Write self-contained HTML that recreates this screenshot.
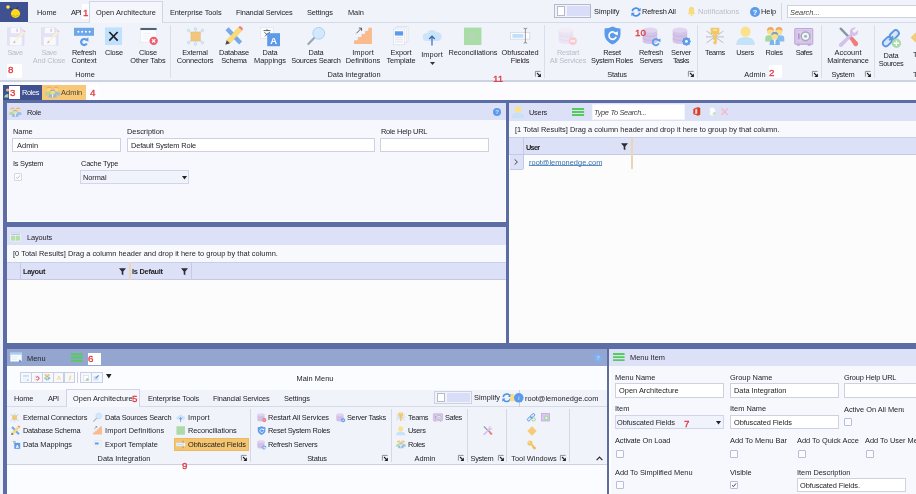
<!DOCTYPE html>
<html><head><meta charset="utf-8"><title>LemonEdge</title>
<style>
*{box-sizing:border-box;margin:0;padding:0}
html,body{width:916px;height:494px;overflow:hidden;background:#f1f3fb}
body{font-family:"Liberation Sans",sans-serif;font-size:7.4px;color:#232328;position:relative}
#app{position:absolute;left:0;top:0;width:916px;height:494px;will-change:transform}
.a{position:absolute;white-space:nowrap}
.t{position:absolute;white-space:nowrap;line-height:9px;height:9px}
.t{transform:rotate(0.01deg)}
.c{transform:translateX(-50%) rotate(0.01deg);text-align:center}
.g{color:#b9bcc9}
.b{font-weight:bold}
.red{position:absolute;color:#e2373f;font-size:9.8px;line-height:10px;white-space:nowrap;transform:rotate(0.01deg);-webkit-text-stroke:0.3px #e2373f}
.wb{position:absolute;background:#fff}
.inp{position:absolute;background:#fff;border:1px solid #cdd1e0;white-space:nowrap;overflow:hidden}
.cb{position:absolute;width:8px;height:8px;background:#fcfcff;border:1px solid #b7bfd8;border-radius:1px}
.sep{position:absolute;width:1px;background:#d3d7e6}
.hdr{position:absolute;background:#dde1f7}
.pan{position:absolute;background:#f9fafe}
svg{position:absolute;overflow:visible}
</style></head><body>
<div id="app">
<!-- top bar -->
<div class="a" style="left:0px;top:0px;width:916px;height:23px;background:#f1f3fb;"></div>
<div class="a" style="left:28px;top:22px;width:61px;height:1px;background:#d5d9e8;"></div>
<div class="a" style="left:163px;top:22px;width:753px;height:1px;background:#d5d9e8;"></div>
<div class="a" style="left:0px;top:1.5px;width:28px;height:20px;background:#3f5191;"></div>
<svg style="left:3.2px;top:2.3px;" width="22" height="19" viewBox="0 0 22 19"><circle cx="5" cy="5" r="1.8" fill="#ffe44d"/><path d="M7 6L10 9M15 5L13 8" stroke="#222" stroke-width="0.8"/><ellipse cx="12.5" cy="11.5" rx="4.6" ry="4.4" fill="#ffd91f"/><path d="M9.5 13.5Q12.5 15.5 15.5 13" stroke="#c9a400" stroke-width="0.8" fill="none"/></svg>
<div class="a" style="left:89px;top:1px;width:74px;height:22px;border:1px solid #cfd4e6;border-bottom:none;background:#f4f6fc"></div>
<div class="t " style="left:37.3px;top:7.9px;letter-spacing:-0.010px;">Home</div>
<div class="t " style="left:70.8px;top:7.9px;letter-spacing:-0.709px;">API</div>
<div class="wb" style="left:82px;top:4px;width:7px;height:15px"></div>
<div class="red" style="left:82.7px;top:8.0px">1</div>
<div class="t " style="left:95.8px;top:7.9px;letter-spacing:0.045px;">Open Architecture</div>
<div class="t " style="left:170.1px;top:7.9px;letter-spacing:-0.083px;">Enterprise Tools</div>
<div class="t " style="left:236.1px;top:7.9px;letter-spacing:-0.197px;">Financial Services</div>
<div class="t " style="left:307px;top:7.9px;letter-spacing:-0.105px;">Settings</div>
<div class="t " style="left:347.8px;top:7.9px;letter-spacing:-0.060px;">Main</div>
<div class="a" style="left:554px;top:4px;width:37px;height:14px;border:1px solid #b4b9cd;background:#f1f3fb"></div>
<div class="a" style="left:556.5px;top:5.5px;width:8px;height:10.5px;border:1px solid #b5b9cc;background:#fff"></div>
<div class="a" style="left:566.5px;top:5.5px;width:23px;height:10.5px;background:#d9ddf7;"></div>
<div class="t " style="left:594px;top:6.9px;letter-spacing:-0.050px;">Simplify</div>
<svg style="left:631px;top:6.5px;" width="10" height="10" viewBox="0 0 10 10"><path d="M1.2 4.2A4 4 0 0 1 8.6 3.2" fill="none" stroke="#4a90e2" stroke-width="1.6"/><path d="M9.6 0.8V4.2H6.2z" fill="#4a90e2"/><path d="M8.8 5.8A4 4 0 0 1 1.4 6.8" fill="none" stroke="#4a90e2" stroke-width="1.6"/><path d="M0.4 9.2V5.8H3.8z" fill="#4a90e2"/></svg>
<div class="t " style="left:642.3px;top:6.9px;letter-spacing:-0.180px;">Refresh All</div>
<svg style="left:687px;top:6px;" width="9" height="11" viewBox="0 0 9 11"><path d="M4.5 0.8C2.6 0.8 1.8 2.4 1.8 4.2V6.6L0.6 8.2H8.4L7.2 6.6V4.2C7.2 2.4 6.4 0.8 4.5 0.8z" fill="#f8db7d"/><circle cx="4.5" cy="9.3" r="1" fill="#f8db7d"/></svg>
<div class="t g" style="left:698px;top:6.9px;letter-spacing:0.077px;">Notifications</div>
<svg style="left:749.5px;top:6.5px;" width="10" height="10" viewBox="0 0 10 10"><circle cx="5" cy="5" r="5" fill="#5b9bea"/><text x="5" y="7.6" font-size="7.5" font-weight="bold" fill="#fff" text-anchor="middle" font-family="Liberation Sans, sans-serif">?</text></svg>
<div class="t " style="left:761px;top:6.9px;letter-spacing:-0.030px;">Help</div>
<div class="a" style="left:781px;top:3px;width:1px;height:17px;background:#d3d7e6;"></div>
<div class="inp" style="left:786.5px;top:5px;width:135px;height:13px;"></div>
<div class="t " style="left:790.0px;top:7.5px;font-style:italic;color:#444">Search...</div>
<!-- ribbon -->
<div class="a" style="left:0px;top:80px;width:916px;height:1.9px;background:#ccd2e2;"></div>
<div class="t c g" style="left:15.3px;top:48.2px;letter-spacing:-0.417px;">Save</div>
<div class="t c g" style="left:49.3px;top:48.2px;letter-spacing:-0.417px;">Save</div>
<div class="t c g" style="left:49.3px;top:56.2px;letter-spacing:-0.171px;">And Close</div>
<div class="t c " style="left:83.7px;top:48.2px;letter-spacing:-0.273px;">Refresh</div>
<div class="t c " style="left:83.7px;top:56.2px;letter-spacing:-0.057px;">Context</div>
<div class="t c " style="left:113.8px;top:48.2px;letter-spacing:-0.184px;">Close</div>
<div class="t c " style="left:148.2px;top:48.2px;letter-spacing:-0.184px;">Close</div>
<div class="t c " style="left:148.2px;top:56.2px;letter-spacing:-0.076px;">Other Tabs</div>
<div class="t c " style="left:85.2px;top:69.8px;letter-spacing:-0.035px;">Home</div>
<div class="wb" style="left:7px;top:64px;width:15px;height:14px"></div>
<div class="red" style="left:7.7px;top:65.2px">8</div>
<div class="a" style="left:170.2px;top:25px;width:1.1px;height:53px;background:#d9ddec;"></div>
<div class="t c " style="left:194.7px;top:48.2px;letter-spacing:-0.231px;">External</div>
<div class="t c " style="left:194.7px;top:56.2px;letter-spacing:-0.114px;">Connectors</div>
<div class="t c " style="left:233.5px;top:48.2px;letter-spacing:-0.209px;">Database</div>
<div class="t c " style="left:233.5px;top:56.2px;letter-spacing:-0.308px;">Schema</div>
<div class="t c " style="left:270.2px;top:48.2px;letter-spacing:-0.208px;">Data</div>
<div class="t c " style="left:270.2px;top:56.2px;letter-spacing:-0.010px;">Mappings</div>
<div class="t c " style="left:316.2px;top:48.2px;letter-spacing:-0.208px;">Data</div>
<div class="t c " style="left:316.2px;top:56.2px;letter-spacing:-0.225px;">Sources Search</div>
<div class="t c " style="left:363.2px;top:48.2px;letter-spacing:0.122px;">Import</div>
<div class="t c " style="left:363.2px;top:56.2px;letter-spacing:0.005px;">Definitions</div>
<div class="t c " style="left:400.9px;top:48.2px;letter-spacing:-0.064px;">Export</div>
<div class="t c " style="left:400.9px;top:56.2px;letter-spacing:-0.128px;">Template</div>
<div class="t c " style="left:431.8px;top:50.2px;letter-spacing:0.122px;">Import</div>
<div class="t c " style="left:472.5px;top:48.2px;letter-spacing:-0.051px;">Reconciliations</div>
<div class="t c " style="left:520.3px;top:48.2px;letter-spacing:-0.084px;">Obfuscated</div>
<div class="t c " style="left:520.3px;top:56.2px;letter-spacing:-0.240px;">Fields</div>
<div class="t c " style="left:353.7px;top:69.8px;letter-spacing:0.028px;">Data Integration</div>
<div class="red" style="left:493.2px;top:73.6px">11</div>
<div class="a" style="left:543.6px;top:25px;width:1.1px;height:53px;background:#d9ddec;"></div>
<div class="t c g" style="left:567.5px;top:48.2px;letter-spacing:-0.264px;">Restart</div>
<div class="t c g" style="left:567.5px;top:56.2px;letter-spacing:-0.163px;">All Services</div>
<div class="t c " style="left:612px;top:48.2px;letter-spacing:-0.326px;">Reset</div>
<div class="t c " style="left:612px;top:56.2px;letter-spacing:-0.304px;">System Roles</div>
<div class="t c " style="left:651px;top:48.2px;letter-spacing:-0.273px;">Refresh</div>
<div class="t c " style="left:651px;top:56.2px;letter-spacing:-0.385px;">Servers</div>
<div class="t c " style="left:680.5px;top:48.2px;letter-spacing:-0.332px;">Server</div>
<div class="t c " style="left:680.5px;top:56.2px;letter-spacing:-0.583px;">Tasks</div>
<div class="t c " style="left:616.7px;top:69.8px;letter-spacing:-0.246px;">Status</div>
<div class="a" style="left:696.8px;top:25px;width:1.1px;height:53px;background:#d9ddec;"></div>
<div class="t c " style="left:715.1px;top:48.2px;letter-spacing:-0.399px;">Teams</div>
<div class="t c " style="left:744.5px;top:48.2px;letter-spacing:-0.325px;">Users</div>
<div class="t c " style="left:774.4px;top:48.2px;letter-spacing:-0.404px;">Roles</div>
<div class="t c " style="left:804.1px;top:48.2px;letter-spacing:-0.484px;">Safes</div>
<div class="t c " style="left:755.2px;top:69.8px;letter-spacing:0.085px;">Admin</div>
<div class="wb" style="left:769px;top:65px;width:13px;height:13px"></div>
<div class="red" style="left:769.2px;top:67.5px">2</div>
<div class="a" style="left:821.2px;top:25px;width:1.1px;height:53px;background:#d9ddec;"></div>
<div class="t c " style="left:848px;top:48.2px;letter-spacing:0.038px;">Account</div>
<div class="t c " style="left:848px;top:56.2px;letter-spacing:-0.070px;">Maintenance</div>
<div class="t c " style="left:843px;top:69.8px;letter-spacing:-0.312px;">System</div>
<div class="a" style="left:873.6px;top:25px;width:1.1px;height:53px;background:#d9ddec;"></div>
<div class="t c " style="left:891.3px;top:50.6px;letter-spacing:-0.208px;">Data</div>
<div class="t c " style="left:891.3px;top:58.6px;letter-spacing:-0.364px;">Sources</div>
<div class="t " style="left:912.5px;top:50.2px;">T</div>
<div class="t " style="left:912.5px;top:69.8px;">T</div>
<svg style="left:535px;top:71px;" width="6" height="6" viewBox="0 0 6 6"><path d="M0.4 5.6V0.4H5.6" fill="none" stroke="#777" stroke-width="0.8"/><path d="M2 2L5 5" fill="none" stroke="#222" stroke-width="1.1"/><path d="M5.9 2.4V5.9H2.4z" fill="#222"/></svg>
<svg style="left:688px;top:71px;" width="6" height="6" viewBox="0 0 6 6"><path d="M0.4 5.6V0.4H5.6" fill="none" stroke="#777" stroke-width="0.8"/><path d="M2 2L5 5" fill="none" stroke="#222" stroke-width="1.1"/><path d="M5.9 2.4V5.9H2.4z" fill="#222"/></svg>
<svg style="left:812px;top:71px;" width="6" height="6" viewBox="0 0 6 6"><path d="M0.4 5.6V0.4H5.6" fill="none" stroke="#777" stroke-width="0.8"/><path d="M2 2L5 5" fill="none" stroke="#222" stroke-width="1.1"/><path d="M5.9 2.4V5.9H2.4z" fill="#222"/></svg>
<svg style="left:864.5px;top:71px;" width="6" height="6" viewBox="0 0 6 6"><path d="M0.4 5.6V0.4H5.6" fill="none" stroke="#777" stroke-width="0.8"/><path d="M2 2L5 5" fill="none" stroke="#222" stroke-width="1.1"/><path d="M5.9 2.4V5.9H2.4z" fill="#222"/></svg>
<svg style="left:429.5px;top:61.5px;" width="5" height="3" viewBox="0 0 5 3"><path d="M0 0H5L2.5 3z" fill="#333"/></svg>
<div class="a" style="left:0;top:0;opacity:1">
<svg style="left:6.699999999999999px;top:26.6px;" width="19.4" height="19.4" viewBox="0 0 20 20"><path d="M0.6 0.8H14.6L17.6 3.8V18.8H0.6z" fill="#e4e3f4" stroke="#d9d8ee" stroke-width="0.6"/><rect x="4" y="0.8" width="9.4" height="5.6" fill="#f8f8fe"/><rect x="9.6" y="1.8" width="1.8" height="3.2" fill="#d2d2e4"/><rect x="3" y="10.4" width="12.2" height="8.4" fill="#f8f8fe"/><path d="M16.8 3.8L18.4 5.2L8.8 15.6L6.6 16.8L7.4 14.4z" fill="#fbf3cf"/><path d="M17.2 3L19.2 4.8L18.4 5.8L16.4 4z" fill="#f4bcbc"/><path d="M6.4 17L7.2 14.2L9 15.8z" fill="#bdbdbd"/></svg>
<svg style="left:41.2px;top:26.6px;" width="19.4" height="19.4" viewBox="0 0 20 20"><path d="M0.6 0.8H14.6L17.6 3.8V18.8H0.6z" fill="#e4e3f4" stroke="#d9d8ee" stroke-width="0.6"/><rect x="4" y="0.8" width="9.4" height="5.6" fill="#f8f8fe"/><rect x="9.6" y="1.8" width="1.8" height="3.2" fill="#d2d2e4"/><rect x="3" y="10.4" width="12.2" height="8.4" fill="#f8f8fe"/><path d="M16.8 3.8L18.4 5.2L8.8 15.6L6.6 16.8L7.4 14.4z" fill="#fbf3cf"/><path d="M17.2 3L19.2 4.8L18.4 5.8L16.4 4z" fill="#f4bcbc"/><path d="M6.4 17L7.2 14.2L9 15.8z" fill="#bdbdbd"/></svg>
<svg style="left:73.5px;top:26.6px;" width="20" height="20" viewBox="0 0 20 20"><rect x="0" y="0.8" width="20" height="8" fill="#6ea6ea"/><g fill="#fff"><circle cx="4.4" cy="4.8" r="1"/><circle cx="8.1" cy="4.8" r="1"/><circle cx="11.9" cy="4.8" r="1"/><circle cx="15.6" cy="4.8" r="1"/></g><path d="M12.6 13.3A3 3 0 1 0 12.8 16.4" fill="none" stroke="#5b9bea" stroke-width="2.2"/><path d="M10.3 12.6L14.4 10.6V14.8z" fill="#5b9bea"/></svg>
<svg style="left:104.3px;top:26.6px;" width="19" height="19" viewBox="0 0 20 20"><rect x="1" y="0.5" width="18" height="18.5" fill="#bfe1fb"/><path d="M5.6 5.2L14.4 14.4M14.4 5.2L5.6 14.4" stroke="#1d1d26" stroke-width="1.7"/></svg>
<svg style="left:138.8px;top:26.6px;" width="19" height="19" viewBox="0 0 20 20"><rect x="1.5" y="1.5" width="17" height="14.5" fill="#fdfdfe" stroke="#e3e5ee" stroke-width="0.6"/><rect x="1.5" y="1" width="17" height="2.2" fill="#4f6278"/><path d="M4 7H13M4 9.5H12M4 12H10" stroke="#eceef4" stroke-width="0.9"/><circle cx="15.4" cy="14.6" r="4.4" fill="#ef5b6b"/><path d="M13.7 12.9L17.1 16.3M17.1 12.9L13.7 16.3" stroke="#fff" stroke-width="1.2"/></svg>
<svg style="left:185.5px;top:26.6px;" width="19" height="19" viewBox="0 0 20 20"><g stroke="#a9d3f3" stroke-width="0.8" fill="#e3f1fc"><path d="M10 5V2.6M10 15V17.4M5 6L3.2 4.2M15 6L16.8 4.2M5 14L3.2 15.8M15 14L16.8 15.8" fill="none"/><circle cx="10" cy="2" r="1.3"/><circle cx="10" cy="18" r="1.3"/><circle cx="2.8" cy="3.6" r="1.3"/><circle cx="17.2" cy="3.6" r="1.3"/><circle cx="2.8" cy="16.4" r="1.3"/><circle cx="17.2" cy="16.4" r="1.3"/></g><rect x="5.2" y="5.2" width="9.8" height="9.6" fill="#f1c67e" stroke="#e0b56a" stroke-width="0.5"/></svg>
<svg style="left:224.5px;top:27px;" width="18" height="18" viewBox="0 0 20 20"><path d="M0.6 3.6L4 0.4L19 16.2L15.6 19.4z" fill="#74a9ec"/><path d="M15 0.4L18.8 3.8L5.6 18L1.8 14.6z" fill="#f9dc78" stroke="#efc45a" stroke-width="0.5"/><path d="M15 0.4L18.8 3.8L20 2.4Q19.4 -0.2 16.4 -1z" fill="#f17f86"/><path d="M1.8 14.6L5.6 18L0.4 19.8z" fill="#4a4a4a"/></svg>
<svg style="left:260.0px;top:26.6px;" width="20" height="20" viewBox="0 0 20 20"><rect x="0.5" y="0.5" width="13" height="11" fill="#fbfcff" stroke="#dfe3ee" stroke-width="0.7"/><path d="M3.5 3.6H10.5M7 2V3.6M4.5 5.2Q7 9.5 9.8 5.2M5 9.4L9 5.4" fill="none" stroke="#444" stroke-width="0.8"/><rect x="7.2" y="6.2" width="12.8" height="13" fill="#5b9bea"/><text x="13.6" y="17" font-size="9.5" font-weight="bold" fill="#fff" text-anchor="middle" font-family="Liberation Sans, sans-serif">A</text></svg>
<svg style="left:307.1px;top:26.6px;" width="19" height="19" viewBox="0 0 20 20"><path d="M8.6 10.6L1.4 18" stroke="#98a7b6" stroke-width="2.2" stroke-linecap="round"/><circle cx="12.4" cy="6.6" r="6.2" fill="#d3e9fb" stroke="#a9d0f0" stroke-width="1"/></svg>
<svg style="left:353.85px;top:26.6px;" width="18.5" height="18.5" viewBox="0 0 20 20"><path d="M0.6 18.4V14.8H4.6V11.4H8.6V8H12.6V4.6H16V0.8H19.4V18.4z" fill="#f9bb8c"/><path d="M0.6 18.4V14.8H4.6V11.4H8.6V8H12.6V4.6H16V0.8" fill="none" stroke="#f2a46c" stroke-width="0.6"/><path d="M2.6 6.8L8 1.4M5.2 1.2H8.2V4.2" fill="none" stroke="#444" stroke-width="0.9"/></svg>
<svg style="left:391.25px;top:26.3px;" width="19.5" height="19.5" viewBox="0 0 20 20"><rect x="6" y="0.4" width="11.5" height="15.5" fill="#fbfcff" stroke="#d9dde8" stroke-width="0.7"/><rect x="4.2" y="1.8" width="11.5" height="15.5" fill="#fbfcff" stroke="#d9dde8" stroke-width="0.7"/><rect x="2.4" y="3.2" width="11.5" height="16" fill="#fdfdff" stroke="#d9dde8" stroke-width="0.7"/><rect x="4" y="5.4" width="8.4" height="4.4" fill="#5b9bea"/><path d="M4 12H12.4M4 14.2H12.4M4 16.4H12.4" stroke="#dfe1e8" stroke-width="1"/></svg>
<svg style="left:422.0px;top:26.4px;" width="20" height="20" viewBox="0 0 20 20"><g fill="#cbe4fa"><circle cx="4.6" cy="11" r="3.9"/><circle cx="10" cy="8.8" r="4.9"/><circle cx="15.4" cy="10.6" r="4.3"/><rect x="4.6" y="10" width="10.8" height="4.9"/></g><path d="M10 19.4V10.4M7.2 13L10 10L12.8 13" fill="none" stroke="#2d66b3" stroke-width="1.15"/></svg>
<svg style="left:463.1px;top:26.6px;" width="19" height="19" viewBox="0 0 20 20"><rect x="1" y="0.6" width="18.4" height="18.4" fill="#a9dca6"/><path d="M5.4 8.4H15M5.4 11.2H15" stroke="#bcd2bb" stroke-width="1.7"/></svg>
<svg style="left:510.29999999999995px;top:26.2px;" width="20" height="20" viewBox="0 0 20 20"><rect x="0.4" y="6.4" width="19.4" height="6.8" fill="#fdfdff" stroke="#d5d8e2" stroke-width="0.8"/><rect x="2.4" y="8" width="11" height="3.8" fill="#bfe0fb"/><path d="M15.4 2.4V17M13.6 2.2Q15.4 2.2 15.4 3.4Q15.4 2.2 17.2 2.2M13.6 17.2Q15.4 17.2 15.4 16Q15.4 17.2 17.2 17.2" fill="none" stroke="#7d7d86" stroke-width="0.8"/></svg>
<svg style="left:558.25px;top:26.6px;" width="18.5" height="18.5" viewBox="0 0 20 20"><path d="M0.8 3.4V15.6A7.8 2.9 0 0 0 16.4 15.6V3.4z" fill="#ebe5f3"/><ellipse cx="8.6" cy="3.4" rx="7.8" ry="2.9" fill="#f1ecf7"/><path d="M0.8 7.4A7.8 2.9 0 0 0 16.4 7.4M0.8 11.6A7.8 2.9 0 0 0 16.4 11.6" fill="none" stroke="#dcd2ea" stroke-width="0.7" stroke-opacity="0.75"/><circle cx="16" cy="15.2" r="4.4" fill="#f7cdd3"/><path d="M13.6 15.2H18.4" stroke="#fff" stroke-width="1.4"/></svg>
<svg style="left:602.5px;top:26.4px;" width="19" height="19" viewBox="0 0 20 20"><path d="M10 0.4Q6 2.6 1.6 2.6V9Q1.6 15.6 10 19.6Q18.4 15.6 18.4 9V2.6Q14 2.6 10 0.4z" fill="#5b9bea"/><path d="M13.6 8.2A3.9 3.9 0 1 0 13.9 11.4" fill="none" stroke="#fff" stroke-width="1.7"/><path d="M11.2 7.8L15.6 5.4V10z" fill="#fff"/></svg>
<svg style="left:642.25px;top:26.6px;" width="18.5" height="18.5" viewBox="0 0 20 20"><path d="M0.8 3.4V15.6A7.8 2.9 0 0 0 16.4 15.6V3.4z" fill="#d3c4e8"/><ellipse cx="8.6" cy="3.4" rx="7.8" ry="2.9" fill="#e0d5f1"/><path d="M0.8 7.4A7.8 2.9 0 0 0 16.4 7.4M0.8 11.6A7.8 2.9 0 0 0 16.4 11.6" fill="none" stroke="#b9a3d6" stroke-width="0.7" stroke-opacity="0.75"/><g transform="translate(0.4 1.2)"><path d="M17.6 13.6A3.4 3.4 0 1 0 17.8 16.4" fill="none" stroke="#5b9bea" stroke-width="1.9"/><path d="M15.6 13.4L19.6 11.2V15.4z" fill="#5b9bea"/></g></svg>
<svg style="left:671.75px;top:26.6px;" width="18.5" height="18.5" viewBox="0 0 20 20"><path d="M0.8 3.4V15.6A7.8 2.9 0 0 0 16.4 15.6V3.4z" fill="#d3c4e8"/><ellipse cx="8.6" cy="3.4" rx="7.8" ry="2.9" fill="#e0d5f1"/><path d="M0.8 7.4A7.8 2.9 0 0 0 16.4 7.4M0.8 11.6A7.8 2.9 0 0 0 16.4 11.6" fill="none" stroke="#b9a3d6" stroke-width="0.7" stroke-opacity="0.75"/><g transform="translate(15.6 15.6)"><circle r="3.1" fill="none" stroke="#5b9bea" stroke-width="2"/><path d="M0 -4.8V4.8M-4.8 0H4.8M-3.4 -3.4L3.4 3.4M3.4 -3.4L-3.4 3.4" stroke="#5b9bea" stroke-width="1.5"/><circle r="1.5" fill="#fff"/></g></svg>
<svg style="left:706.0px;top:27px;" width="18" height="18" viewBox="0 0 20 20"><path d="M0.6 4.4L19.4 17.6M19.4 4.4L0.6 17.6M0 11H20" stroke="#a3a8b5" stroke-width="0.8"/><path d="M5.2 0.8H14.8V7.8H12V18L10 19.6L8 18V16H9.4V14.4H8V7.8H5.2z" fill="#f2c765"/><rect x="7.6" y="2.4" width="4.8" height="1.8" rx="0.6" fill="#fbe7b0"/></svg>
<svg style="left:735.5px;top:26.3px;" width="19" height="19" viewBox="0 0 20 20"><circle cx="10" cy="6" r="5.4" fill="#fbe18d"/><path d="M0.6 19.4Q0.6 12.2 10 12.2Q19.4 12.2 19.4 19.4z" fill="#c5e3f8" stroke="#b3d6f0" stroke-width="0.5"/></svg>
<svg style="left:765.25px;top:26.4px;" width="19.5" height="19.5" viewBox="0 0 20 20"><path d="M0.2 16V13Q0.2 9.6 4 9.6H8V16z" fill="#a6d8a0"/><path d="M19.8 16V13Q19.8 9.6 16 9.6H12V16z" fill="#86bdf0"/><circle cx="5.6" cy="5.4" r="3.5" fill="#f8df8c"/><circle cx="14.4" cy="5.4" r="3.5" fill="#f8df8c"/><path d="M2 5.2Q2 1 5.6 1Q9.2 1 9.2 5.2Q7.4 3.4 5.6 3.6Q3.8 3.4 2 5.2zM10.8 5.2Q10.8 1 14.4 1Q18 1 18 5.2Q16.2 3.4 14.4 3.6Q12.6 3.4 10.8 5.2z" fill="#f2a560"/><path d="M4.8 19.6V17.2Q4.8 14 8 14H12Q15.2 14 15.2 17.2V19.6z" fill="#7db4ec"/><path d="M9 14H11L10.5 19H9.5z" fill="#fff"/><circle cx="10" cy="10" r="3.5" fill="#f8df8c"/><path d="M6.4 9.8Q6.4 5.8 10 5.8Q13.6 5.8 13.6 9.8Q11.8 8 10 8.2Q8.2 8 6.4 9.8z" fill="#7f9fc6"/></svg>
<svg style="left:794.45px;top:26.6px;" width="19.5" height="19.5" viewBox="0 0 20 20"><rect x="0.8" y="1.6" width="18.4" height="16" rx="1" fill="#dccdec" stroke="#bda4da" stroke-width="1.1"/><rect x="3" y="3.8" width="14" height="11.6" fill="none" stroke="#cbb8e2" stroke-width="0.7"/><circle cx="11.8" cy="9.6" r="4.4" fill="#f3f4f8" stroke="#a4aab8" stroke-width="1.5"/><circle cx="11.8" cy="9.6" r="1.5" fill="#a4aab8"/><rect x="4.2" y="6.6" width="1.5" height="6" fill="#a98fd0"/><rect x="3" y="17.6" width="3" height="1.6" fill="#bda4da"/><rect x="14" y="17.6" width="3" height="1.6" fill="#bda4da"/></svg>
<svg style="left:838.05px;top:26.6px;" width="20.5" height="20.5" viewBox="0 0 20 20"><path d="M2.6 1.6L11.6 10.8" stroke="#8797a7" stroke-width="2.3" stroke-linecap="round"/><path d="M10.6 10.6L13 8.4L19.4 15.2Q20.2 17.4 18.6 18.6Q17 19.4 15.6 18z" fill="#f07c7e"/><path d="M17.8 0.8Q13.4 -0.6 11.8 3.2Q11.2 5 12 6.6L1.2 16.4Q0.2 18.2 1.6 19.2Q3 20 4.4 18.8L14.2 8.4Q17 9.4 19 7Q20.2 5 19.6 3L16.8 5.6L14.6 5L14.2 3.2z" fill="#d3c1ea"/></svg>
<svg style="left:881.95px;top:28.6px;" width="19.5" height="19.5" viewBox="0 0 20 20"><g fill="#d9e7f9" stroke="#5b96e2" stroke-width="1.9"><rect x="9.4" y="0.6" width="6.4" height="10.6" rx="3.2" transform="rotate(45 12.6 5.9)"/><rect x="2.2" y="7.8" width="6.4" height="10.6" rx="3.2" transform="rotate(45 5.4 13.1)"/></g><path d="M7.4 11.6L11.4 7.6" stroke="#5b96e2" stroke-width="2"/><circle cx="14.8" cy="14.6" r="4.8" fill="#a9dba8"/><path d="M14.8 11.8V17.4M12 14.6H17.6" stroke="#fff" stroke-width="1.4"/></svg>
<svg style="left:909.7px;top:26.6px;" width="21" height="21" viewBox="0 0 20 20"><path d="M10 0.6L19.4 10L10 19.4L0.6 10z" fill="#f5cb78"/></svg>
</div>
<div class="red" style="left:634.8px;top:28.2px">10</div>
<!-- doc tabs -->
<div class="a" style="left:0px;top:81.5px;width:916px;height:18px;background:#fcfcfe;"></div>
<div class="a" style="left:3px;top:85px;width:39px;height:15px;background:#3f5191;"></div>
<div class="a" style="left:42px;top:84.6px;width:44px;height:15px;background:#f6c877;"></div>
<div class="wb" style="left:8.6px;top:85.6px;width:11.6px;height:13.2px"></div>
<div class="red" style="left:9.5px;top:87.5px">3</div>
<div class="t " style="left:22px;top:87.8px;color:#fff;letter-spacing:-0.344px;">Roles</div>
<div class="t " style="left:61.4px;top:87.9px;color:#4a4232;letter-spacing:0.065px;">Admin</div>
<div class="wb" style="left:89.4px;top:85px;width:9.8px;height:15.3px"></div>
<div class="red" style="left:89.5px;top:87.5px">4</div>
<!-- frame -->
<div class="a" style="left:3px;top:99.5px;width:913px;height:395px;background:#5c6da6;"></div>
<div class="a" style="left:6.8px;top:103.4px;width:499px;height:118.5px;background:#fff;"></div>
<div class="a" style="left:8px;top:120px;width:496.6px;height:100.5px;background:#f7f8fd;"></div>
<div class="a" style="left:6.8px;top:103.4px;width:499px;height:17px;background:#dde1f7;"></div>
<div class="t " style="left:27.3px;top:108.2px;letter-spacing:-0.255px;">Role</div>
<div class="t " style="left:12.7px;top:127.4px;">Name</div>
<div class="inp" style="left:12px;top:138px;width:108.5px;height:14.2px;"></div>
<div class="t " style="left:16.6px;top:141.1px;letter-spacing:0.045px;">Admin</div>
<div class="t " style="left:127.3px;top:127.4px;">Description</div>
<div class="inp" style="left:127px;top:138px;width:248px;height:14.2px;"></div>
<div class="t " style="left:130.8px;top:141.1px;letter-spacing:-0.129px;">Default System Role</div>
<div class="t " style="left:381px;top:127.4px;letter-spacing:-0.242px;">Role Help URL</div>
<div class="inp" style="left:380.3px;top:138px;width:109px;height:14.2px;"></div>
<div class="t " style="left:12.7px;top:159.4px;letter-spacing:-0.243px;">Is System</div>
<div class="cb" style="left:13.5px;top:173px;border-color:#d5d7e2;"><svg style="left:0;top:0" width="6" height="6" viewBox="0 0 6 6"><path d="M1 3.2L2.5 4.6L5 1.4" fill="none" stroke="#b9bccb" stroke-width="0.9"/></svg></div>
<div class="t " style="left:80.8px;top:159.4px;letter-spacing:-0.205px;">Cache Type</div>
<div class="inp" style="left:80px;top:169.8px;width:109px;height:14.2px;background:#f1f3fc;border-color:#d0d5e8"></div>
<div class="t " style="left:83px;top:172.9px;letter-spacing:-0.058px;">Normal</div>
<svg style="left:182px;top:175.5px;" width="5" height="3.5" viewBox="0 0 5 3.5"><path d="M0 0H5L2.5 3.5z" fill="#222"/></svg>
<svg style="left:492.5px;top:108px;" width="8" height="8" viewBox="0 0 8 8"><circle cx="4" cy="4" r="4" fill="#5b9bea"/><text x="4" y="6.3" font-size="6" font-weight="bold" fill="#cfe3ff" text-anchor="middle" font-family="Liberation Sans, sans-serif">?</text></svg>
<div class="a" style="left:509.2px;top:103.4px;width:407px;height:239.8px;background:#fcfcfd;"></div>
<div class="a" style="left:509.2px;top:120.6px;width:407px;height:17px;background:#f8f9fd;"></div>
<div class="a" style="left:509.2px;top:103.4px;width:407px;height:17.2px;background:#dde1f7;"></div>
<div class="t " style="left:528.8px;top:108.2px;letter-spacing:-0.245px;">Users</div>
<div class="inp" style="left:591.5px;top:104px;width:93px;height:16px;border-color:#f3f4fb"></div>
<div class="t " style="left:594.3px;top:108.0px;font-style:italic;color:#444;letter-spacing:-0.309px;">Type To Search...</div>
<div class="t " style="left:514.9px;top:124.9px;letter-spacing:0.021px;">[1 Total Results] Drag a column header and drop it here to group by that column.</div>
<div class="a" style="left:509.2px;top:137.6px;width:407px;height:16.8px;background:#dde1f7;"></div>
<div class="a" style="left:509.2px;top:137.4px;width:407px;height:0.8px;background:#c9cfea;"></div>
<div class="a" style="left:509.2px;top:154px;width:407px;height:0.8px;background:#c3c9e6;"></div>
<div class="a" style="left:522.6px;top:137.7px;width:0.8px;height:31.4px;background:#c3c9e6;"></div>
<div class="t b" style="left:526px;top:142.5px;letter-spacing:-0.739px;">User</div>
<div class="a" style="left:631.2px;top:137.7px;width:2.2px;height:31px;background:#ead6b4;"></div>
<div class="a" style="left:509.8px;top:154.8px;width:12.8px;height:14.2px;background:#dde1f7;"></div>
<div class="a" style="left:509.8px;top:168.6px;width:13.6px;height:0.7px;background:#c3c9e6;"></div>
<div class="t " style="left:528.8px;top:157.7px;color:#3471ab;letter-spacing:0.033px;">root@lemonedge.com</div>
<div class="a" style="left:528.8px;top:165px;width:73.5px;height:0.8px;background:#5b8cc0;"></div>
<svg style="left:514.2px;top:159.3px;" width="4" height="6" viewBox="0 0 4 6"><path d="M0.6 0.4L3.4 3L0.6 5.6" fill="none" stroke="#333" stroke-width="0.9"/></svg>
<div class="a" style="left:6.8px;top:227.2px;width:499px;height:116px;background:#fcfcfd;"></div>
<div class="a" style="left:6.8px;top:244.7px;width:499px;height:17.3px;background:#f8f9fd;"></div>
<div class="a" style="left:6.8px;top:227.2px;width:499px;height:17.5px;background:#dde1f7;"></div>
<div class="t " style="left:27px;top:232.5px;letter-spacing:-0.102px;">Layouts</div>
<div class="t " style="left:12.5px;top:249.3px;letter-spacing:0.026px;">[0 Total Results] Drag a column header and drop it here to group by that column.</div>
<div class="a" style="left:6.8px;top:262px;width:499px;height:17.5px;background:#dde1f7;"></div>
<div class="a" style="left:6.8px;top:261.7px;width:499px;height:0.8px;background:#c9cfea;"></div>
<div class="a" style="left:6.8px;top:279px;width:499px;height:0.8px;background:#c3c9e6;"></div>
<div class="a" style="left:20.3px;top:262px;width:0.8px;height:17.5px;background:#c5cae6;"></div>
<div class="t b" style="left:23px;top:266.7px;letter-spacing:-0.376px;">Layout</div>
<div class="a" style="left:128.8px;top:262px;width:2px;height:17.5px;background:#ead6b4;"></div>
<div class="t b" style="left:132.2px;top:266.7px;letter-spacing:-0.250px;">Is Default</div>
<div class="a" style="left:190.6px;top:262px;width:0.8px;height:17.5px;background:#c5cae6;"></div>
<div class="a" style="left:6.8px;top:348.7px;width:599.9px;height:145.3px;background:#fbfcff;"></div>
<div class="a" style="left:6.8px;top:348.7px;width:599.9px;height:17.2px;background:#94a5cf;"></div>
<div class="t " style="left:27px;top:353.6px;letter-spacing:0.048px;">Menu</div>
<div class="wb" style="left:88px;top:352.5px;width:13px;height:12.8px"></div>
<div class="red" style="left:88.2px;top:354.2px">6</div>
<div class="t c " style="left:314.5px;top:373.7px;letter-spacing:0.044px;">Main Menu</div>
<div class="a" style="left:6.8px;top:389.5px;width:599.9px;height:75px;background:#f1f3fb;"></div>
<div class="a" style="left:7px;top:406.1px;width:59px;height:1px;background:#d5d9e8;"></div>
<div class="a" style="left:140px;top:406.1px;width:466.7px;height:1px;background:#d5d9e8;"></div>
<div class="a" style="left:66px;top:389px;width:74px;height:18.1px;border:1px solid #cfd4e6;border-bottom:none;background:#f5f7fd"></div>
<div class="t " style="left:14px;top:393.6px;letter-spacing:-0.135px;">Home</div>
<div class="t " style="left:48px;top:393.6px;letter-spacing:-0.476px;">API</div>
<div class="t " style="left:73px;top:393.6px;letter-spacing:0.034px;">Open Architecture</div>
<div class="red" style="left:131.5px;top:394.2px">5</div>
<div class="t " style="left:148px;top:393.6px;letter-spacing:-0.114px;">Enterprise Tools</div>
<div class="t " style="left:213.2px;top:393.6px;letter-spacing:-0.197px;">Financial Services</div>
<div class="t " style="left:283.6px;top:393.6px;letter-spacing:-0.105px;">Settings</div>
<div class="a" style="left:434.3px;top:390.8px;width:37.6px;height:13px;border:1px solid #cdd2e3;background:#f1f3fb"></div>
<div class="a" style="left:437px;top:392.5px;width:8px;height:9.6px;border:1px solid #b5b9cc;background:#fff"></div>
<div class="a" style="left:446.5px;top:392.5px;width:23.7px;height:9.6px;background:#d9ddf7;"></div>
<div class="t " style="left:474.3px;top:393.1px;letter-spacing:0.012px;">Simplify</div>
<div class="t " style="left:525px;top:393.9px;letter-spacing:0.033px;">root@lemonedge.com</div>
<div class="a" style="left:519.3px;top:389.5px;width:0.9px;height:17px;background:#c9cee3;"></div>
<div class="a" style="left:6.8px;top:464px;width:599.9px;height:1px;background:#cdd1e0;"></div>
<div class="a" style="left:173.5px;top:437.7px;width:75.4px;height:13.8px;background:#f4c56e;border:0.8px solid #ebb95f"></div>
<div class="t " style="left:22.6px;top:412.5px;letter-spacing:-0.144px;">External Connectors</div>
<div class="t " style="left:22.6px;top:426.4px;letter-spacing:-0.232px;">Database Schema</div>
<div class="t " style="left:22.6px;top:440.2px;letter-spacing:-0.059px;">Data Mappings</div>
<div class="t " style="left:104.6px;top:412.5px;letter-spacing:-0.207px;">Data Sources Search</div>
<div class="t " style="left:104.6px;top:426.4px;letter-spacing:0.096px;">Import Definitions</div>
<div class="t " style="left:104.6px;top:440.2px;letter-spacing:-0.035px;">Export Template</div>
<div class="t " style="left:188.2px;top:412.5px;letter-spacing:0.105px;">Import</div>
<div class="t " style="left:188.2px;top:426.4px;letter-spacing:-0.071px;">Reconciliations</div>
<div class="t " style="left:188.2px;top:440.2px;letter-spacing:-0.108px;">Obfuscated Fields</div>
<div class="t c " style="left:123.6px;top:453.6px;letter-spacing:0.022px;">Data Integration</div>
<div class="red" style="left:181.7px;top:461.0px">9</div>
<div class="a" style="left:250.2px;top:408.7px;width:1px;height:53.5px;background:#d3d7e6;"></div>
<div class="t " style="left:268.4px;top:412.5px;letter-spacing:-0.158px;">Restart All Services</div>
<div class="t " style="left:268.4px;top:426.4px;letter-spacing:-0.274px;">Reset System Roles</div>
<div class="t " style="left:268.4px;top:440.2px;letter-spacing:-0.264px;">Refresh Servers</div>
<div class="t " style="left:347.4px;top:412.5px;letter-spacing:-0.311px;">Server Tasks</div>
<div class="t c " style="left:317.2px;top:453.6px;letter-spacing:-0.213px;">Status</div>
<div class="a" style="left:391.4px;top:408.7px;width:1px;height:53.5px;background:#d3d7e6;"></div>
<div class="t " style="left:408.3px;top:412.5px;letter-spacing:-0.299px;">Teams</div>
<div class="t " style="left:408.3px;top:426.4px;letter-spacing:-0.345px;">Users</div>
<div class="t " style="left:408.3px;top:440.2px;letter-spacing:-0.404px;">Roles</div>
<div class="t " style="left:445.2px;top:412.5px;letter-spacing:-0.404px;">Safes</div>
<div class="t c " style="left:424.9px;top:453.6px;letter-spacing:0.005px;">Admin</div>
<div class="a" style="left:466.8px;top:408.7px;width:1px;height:53.5px;background:#d3d7e6;"></div>
<div class="t c " style="left:482.4px;top:453.6px;letter-spacing:-0.278px;">System</div>
<div class="a" style="left:506.4px;top:408.7px;width:1px;height:53.5px;background:#d3d7e6;"></div>
<div class="t c " style="left:533.5px;top:453.6px;letter-spacing:-0.021px;">Tool Windows</div>
<div class="a" style="left:569px;top:408.7px;width:1px;height:53.5px;background:#d3d7e6;"></div>
<svg style="left:241.3px;top:455.2px;" width="6" height="6" viewBox="0 0 6 6"><path d="M0.4 5.6V0.4H5.6" fill="none" stroke="#777" stroke-width="0.8"/><path d="M2 2L5 5" fill="none" stroke="#222" stroke-width="1.1"/><path d="M5.9 2.4V5.9H2.4z" fill="#222"/></svg>
<svg style="left:382.3px;top:455.2px;" width="6" height="6" viewBox="0 0 6 6"><path d="M0.4 5.6V0.4H5.6" fill="none" stroke="#777" stroke-width="0.8"/><path d="M2 2L5 5" fill="none" stroke="#222" stroke-width="1.1"/><path d="M5.9 2.4V5.9H2.4z" fill="#222"/></svg>
<svg style="left:458.4px;top:455.2px;" width="6" height="6" viewBox="0 0 6 6"><path d="M0.4 5.6V0.4H5.6" fill="none" stroke="#777" stroke-width="0.8"/><path d="M2 2L5 5" fill="none" stroke="#222" stroke-width="1.1"/><path d="M5.9 2.4V5.9H2.4z" fill="#222"/></svg>
<svg style="left:498px;top:455.2px;" width="6" height="6" viewBox="0 0 6 6"><path d="M0.4 5.6V0.4H5.6" fill="none" stroke="#777" stroke-width="0.8"/><path d="M2 2L5 5" fill="none" stroke="#222" stroke-width="1.1"/><path d="M5.9 2.4V5.9H2.4z" fill="#222"/></svg>
<svg style="left:560.3px;top:455.2px;" width="6" height="6" viewBox="0 0 6 6"><path d="M0.4 5.6V0.4H5.6" fill="none" stroke="#777" stroke-width="0.8"/><path d="M2 2L5 5" fill="none" stroke="#222" stroke-width="1.1"/><path d="M5.9 2.4V5.9H2.4z" fill="#222"/></svg>
<svg style="left:595.5px;top:456px;" width="7" height="5" viewBox="0 0 7 5"><path d="M0.6 4.2L3.5 1L6.4 4.2" fill="none" stroke="#2a2a2a" stroke-width="1.15"/></svg>
<div class="a" style="left:20.2px;top:372.4px;width:11.6px;height:10.2px;border:1px solid #c9cee3;background:#f7f8fd"></div>
<div class="a" style="left:31.1px;top:372.4px;width:11.6px;height:10.2px;border:1px solid #c9cee3;background:#f7f8fd"></div>
<div class="a" style="left:42.0px;top:372.4px;width:11.6px;height:10.2px;border:1px solid #c9cee3;background:#f7f8fd"></div>
<div class="a" style="left:52.900000000000006px;top:372.4px;width:11.6px;height:10.2px;border:1px solid #c9cee3;background:#f7f8fd"></div>
<div class="a" style="left:63.8px;top:372.4px;width:11.6px;height:10.2px;border:1px solid #c9cee3;background:#f7f8fd"></div>
<div class="a" style="left:80.2px;top:372.4px;width:11.6px;height:10.2px;border:1px solid #c9cee3;background:#f7f8fd"></div>
<div class="a" style="left:91.0px;top:372.4px;width:11.6px;height:10.2px;border:1px solid #c9cee3;background:#f7f8fd"></div>
<div class="a" style="left:77.4px;top:372px;width:0.9px;height:11.4px;background:#c9cee3;"></div>
<svg style="left:22.8px;top:374.5px;" width="6" height="6" viewBox="0 0 20 20"><rect x="0.6" y="1.6" width="18.8" height="15.6" fill="#f6fbff" stroke="#c6def2" stroke-width="0.8"/><rect x="0.6" y="1.6" width="18.8" height="3.4" fill="#a8d0f2"/><path d="M3 8.4H13M3 11H11M3 13.6H12" stroke="#e1e8f2" stroke-width="1"/><path d="M15 13.6L19.6 17.4L17 17.8L15.6 19.8z" fill="#4a7ec0"/></svg>
<svg style="left:33.5px;top:374.8px;" width="6" height="6" viewBox="0 0 6 6"><path d="M1 1H5V5H1z" fill="none" stroke="#d9dbe6" stroke-width="0.7"/><path d="M2.4 4.6A1.6 1.6 0 1 0 2 2.6" fill="none" stroke="#e8474f" stroke-width="1"/></svg>
<svg style="left:44.3px;top:374.4px;" width="6.4" height="6.4" viewBox="0 0 20 20"><path d="M0.2 16V13Q0.2 9.6 4 9.6H8V16z" fill="#a6d8a0"/><path d="M19.8 16V13Q19.8 9.6 16 9.6H12V16z" fill="#86bdf0"/><circle cx="5.6" cy="5.4" r="3.5" fill="#f8df8c"/><circle cx="14.4" cy="5.4" r="3.5" fill="#f8df8c"/><path d="M2 5.2Q2 1 5.6 1Q9.2 1 9.2 5.2Q7.4 3.4 5.6 3.6Q3.8 3.4 2 5.2zM10.8 5.2Q10.8 1 14.4 1Q18 1 18 5.2Q16.2 3.4 14.4 3.6Q12.6 3.4 10.8 5.2z" fill="#f2a560"/><path d="M4.8 19.6V17.2Q4.8 14 8 14H12Q15.2 14 15.2 17.2V19.6z" fill="#7db4ec"/><path d="M9 14H11L10.5 19H9.5z" fill="#fff"/><circle cx="10" cy="10" r="3.5" fill="#f8df8c"/><path d="M6.4 9.8Q6.4 5.8 10 5.8Q13.6 5.8 13.6 9.8Q11.8 8 10 8.2Q8.2 8 6.4 9.8z" fill="#7f9fc6"/></svg>
<svg style="left:55.6px;top:374.8px;" width="6" height="6" viewBox="0 0 6 6"><text x="3" y="5.3" font-size="6" font-weight="bold" fill="#f7d774" text-anchor="middle" font-family="Liberation Sans, sans-serif">A</text></svg>
<svg style="left:66.6px;top:374.8px;" width="6" height="6" viewBox="0 0 6 6"><path d="M3.6 0.6L2.4 5.4" stroke="#f7d774" stroke-width="1.3"/></svg>
<svg style="left:82.6px;top:374.6px;" width="6" height="6" viewBox="0 0 6 6"><rect x="0.6" y="0.6" width="4.8" height="4.8" fill="#fff" stroke="#d5d8e2" stroke-width="0.6"/><circle cx="4.4" cy="4.4" r="1.5" fill="#a8daa6"/></svg>
<svg style="left:93.2px;top:374.6px;" width="6" height="6" viewBox="0 0 6 6"><rect x="0.4" y="1" width="5" height="4.6" fill="#cfe6fa"/><path d="M2.6 3.4L5.6 0.4" stroke="#4a90e2" stroke-width="1.1"/></svg>
<svg style="left:106.2px;top:374.4px;" width="5.6" height="4.4" viewBox="0 0 5.6 4.4"><path d="M0 0H5.6L2.8 4.4z" fill="#222"/></svg>
<svg style="left:10.4px;top:412.5px;" width="9.2" height="9.2" viewBox="0 0 20 20"><g stroke="#a9d3f3" stroke-width="0.8" fill="#e3f1fc"><path d="M10 5V2.6M10 15V17.4M5 6L3.2 4.2M15 6L16.8 4.2M5 14L3.2 15.8M15 14L16.8 15.8" fill="none"/><circle cx="10" cy="2" r="1.3"/><circle cx="10" cy="18" r="1.3"/><circle cx="2.8" cy="3.6" r="1.3"/><circle cx="17.2" cy="3.6" r="1.3"/><circle cx="2.8" cy="16.4" r="1.3"/><circle cx="17.2" cy="16.4" r="1.3"/></g><rect x="5.2" y="5.2" width="9.8" height="9.6" fill="#f1c67e" stroke="#e0b56a" stroke-width="0.5"/></svg>
<svg style="left:10.5px;top:426.4px;" width="9.2" height="9.2" viewBox="0 0 20 20"><path d="M0.6 3.6L4 0.4L19 16.2L15.6 19.4z" fill="#74a9ec"/><path d="M15 0.4L18.8 3.8L5.6 18L1.8 14.6z" fill="#f9dc78" stroke="#efc45a" stroke-width="0.5"/><path d="M15 0.4L18.8 3.8L20 2.4Q19.4 -0.2 16.4 -1z" fill="#f17f86"/><path d="M1.8 14.6L5.6 18L0.4 19.8z" fill="#4a4a4a"/></svg>
<svg style="left:10.5px;top:440.2px;" width="9.2" height="9.2" viewBox="0 0 20 20"><rect x="0.5" y="0.5" width="13" height="11" fill="#fbfcff" stroke="#dfe3ee" stroke-width="0.7"/><path d="M3.5 3.6H10.5M7 2V3.6M4.5 5.2Q7 9.5 9.8 5.2M5 9.4L9 5.4" fill="none" stroke="#444" stroke-width="0.8"/><rect x="7.2" y="6.2" width="12.8" height="13" fill="#5b9bea"/><text x="13.6" y="17" font-size="9.5" font-weight="bold" fill="#fff" text-anchor="middle" font-family="Liberation Sans, sans-serif">A</text></svg>
<svg style="left:92.6px;top:412.5px;" width="9.2" height="9.2" viewBox="0 0 20 20"><path d="M8.6 10.6L1.4 18" stroke="#98a7b6" stroke-width="2.2" stroke-linecap="round"/><circle cx="12.4" cy="6.6" r="6.2" fill="#d3e9fb" stroke="#a9d0f0" stroke-width="1"/></svg>
<svg style="left:92.6px;top:426.4px;" width="9.2" height="9.2" viewBox="0 0 20 20"><path d="M0.6 18.4V14.8H4.6V11.4H8.6V8H12.6V4.6H16V0.8H19.4V18.4z" fill="#f9bb8c"/><path d="M0.6 18.4V14.8H4.6V11.4H8.6V8H12.6V4.6H16V0.8" fill="none" stroke="#f2a46c" stroke-width="0.6"/><path d="M2.6 6.8L8 1.4M5.2 1.2H8.2V4.2" fill="none" stroke="#444" stroke-width="0.9"/></svg>
<svg style="left:92.6px;top:440.2px;" width="9.2" height="9.2" viewBox="0 0 20 20"><rect x="6" y="0.4" width="11.5" height="15.5" fill="#fbfcff" stroke="#d9dde8" stroke-width="0.7"/><rect x="4.2" y="1.8" width="11.5" height="15.5" fill="#fbfcff" stroke="#d9dde8" stroke-width="0.7"/><rect x="2.4" y="3.2" width="11.5" height="16" fill="#fdfdff" stroke="#d9dde8" stroke-width="0.7"/><rect x="4" y="5.4" width="8.4" height="4.4" fill="#5b9bea"/><path d="M4 12H12.4M4 14.2H12.4M4 16.4H12.4" stroke="#dfe1e8" stroke-width="1"/></svg>
<svg style="left:176px;top:412.5px;" width="9.2" height="9.2" viewBox="0 0 20 20"><g fill="#cbe4fa"><circle cx="4.6" cy="11" r="3.9"/><circle cx="10" cy="8.8" r="4.9"/><circle cx="15.4" cy="10.6" r="4.3"/><rect x="4.6" y="10" width="10.8" height="4.9"/></g><path d="M10 19.4V10.4M7.2 13L10 10L12.8 13" fill="none" stroke="#2d66b3" stroke-width="1.15"/></svg>
<svg style="left:176px;top:426.4px;" width="9.2" height="9.2" viewBox="0 0 20 20"><rect x="1" y="0.6" width="18.4" height="18.4" fill="#a9dca6"/><path d="M5.4 8.4H15M5.4 11.2H15" stroke="#bcd2bb" stroke-width="1.7"/></svg>
<svg style="left:176px;top:440.2px;" width="9.2" height="9.2" viewBox="0 0 20 20"><rect x="0.4" y="6.4" width="19.4" height="6.8" fill="#fdfdff" stroke="#d5d8e2" stroke-width="0.8"/><rect x="2.4" y="8" width="11" height="3.8" fill="#bfe0fb"/><path d="M15.4 2.4V17M13.6 2.2Q15.4 2.2 15.4 3.4Q15.4 2.2 17.2 2.2M13.6 17.2Q15.4 17.2 15.4 16Q15.4 17.2 17.2 17.2" fill="none" stroke="#7d7d86" stroke-width="0.8"/></svg>
<svg style="left:257px;top:412.5px;" width="9.2" height="9.2" viewBox="0 0 20 20"><path d="M0.8 3.4V15.6A7.8 2.9 0 0 0 16.4 15.6V3.4z" fill="#d3c4e8"/><ellipse cx="8.6" cy="3.4" rx="7.8" ry="2.9" fill="#e0d5f1"/><path d="M0.8 7.4A7.8 2.9 0 0 0 16.4 7.4M0.8 11.6A7.8 2.9 0 0 0 16.4 11.6" fill="none" stroke="#b9a3d6" stroke-width="0.7" stroke-opacity="0.75"/><circle cx="16" cy="15.2" r="4.4" fill="#ef6b78"/><path d="M13.6 15.2H18.4" stroke="#fff" stroke-width="1.4"/></svg>
<svg style="left:257px;top:426.4px;" width="9.2" height="9.2" viewBox="0 0 20 20"><path d="M10 0.4Q6 2.6 1.6 2.6V9Q1.6 15.6 10 19.6Q18.4 15.6 18.4 9V2.6Q14 2.6 10 0.4z" fill="#5b9bea"/><path d="M13.6 8.2A3.9 3.9 0 1 0 13.9 11.4" fill="none" stroke="#fff" stroke-width="1.7"/><path d="M11.2 7.8L15.6 5.4V10z" fill="#fff"/></svg>
<svg style="left:257px;top:440.2px;" width="9.2" height="9.2" viewBox="0 0 20 20"><path d="M0.8 3.4V15.6A7.8 2.9 0 0 0 16.4 15.6V3.4z" fill="#d3c4e8"/><ellipse cx="8.6" cy="3.4" rx="7.8" ry="2.9" fill="#e0d5f1"/><path d="M0.8 7.4A7.8 2.9 0 0 0 16.4 7.4M0.8 11.6A7.8 2.9 0 0 0 16.4 11.6" fill="none" stroke="#b9a3d6" stroke-width="0.7" stroke-opacity="0.75"/><g transform="translate(0.4 1.2)"><path d="M17.6 13.6A3.4 3.4 0 1 0 17.8 16.4" fill="none" stroke="#5b9bea" stroke-width="1.9"/><path d="M15.6 13.4L19.6 11.2V15.4z" fill="#5b9bea"/></g></svg>
<svg style="left:335.7px;top:412.5px;" width="9.2" height="9.2" viewBox="0 0 20 20"><path d="M0.8 3.4V15.6A7.8 2.9 0 0 0 16.4 15.6V3.4z" fill="#d3c4e8"/><ellipse cx="8.6" cy="3.4" rx="7.8" ry="2.9" fill="#e0d5f1"/><path d="M0.8 7.4A7.8 2.9 0 0 0 16.4 7.4M0.8 11.6A7.8 2.9 0 0 0 16.4 11.6" fill="none" stroke="#b9a3d6" stroke-width="0.7" stroke-opacity="0.75"/><g transform="translate(15.6 15.6)"><circle r="3.1" fill="none" stroke="#5b9bea" stroke-width="2"/><path d="M0 -4.8V4.8M-4.8 0H4.8M-3.4 -3.4L3.4 3.4M3.4 -3.4L-3.4 3.4" stroke="#5b9bea" stroke-width="1.5"/><circle r="1.5" fill="#fff"/></g></svg>
<svg style="left:396px;top:412.40000000000003px;" width="9.4" height="9.4" viewBox="0 0 20 20"><path d="M0.6 4.4L19.4 17.6M19.4 4.4L0.6 17.6M0 11H20" stroke="#a3a8b5" stroke-width="0.8"/><path d="M5.2 0.8H14.8V7.8H12V18L10 19.6L8 18V16H9.4V14.4H8V7.8H5.2z" fill="#f2c765"/><rect x="7.6" y="2.4" width="4.8" height="1.8" rx="0.6" fill="#fbe7b0"/></svg>
<svg style="left:396px;top:426.3px;" width="9.4" height="9.4" viewBox="0 0 20 20"><circle cx="10" cy="6" r="5.4" fill="#fbe18d"/><path d="M0.6 19.4Q0.6 12.2 10 12.2Q19.4 12.2 19.4 19.4z" fill="#c5e3f8" stroke="#b3d6f0" stroke-width="0.5"/></svg>
<svg style="left:395.8px;top:440.40000000000003px;opacity:0.85" width="9.8" height="8.4" viewBox="0 0 20 20" preserveAspectRatio="none"><path d="M0.2 16V13Q0.2 9.6 4 9.6H8V16z" fill="#a6d8a0"/><path d="M19.8 16V13Q19.8 9.6 16 9.6H12V16z" fill="#86bdf0"/><circle cx="5.6" cy="5.4" r="3.5" fill="#f8df8c"/><circle cx="14.4" cy="5.4" r="3.5" fill="#f8df8c"/><path d="M2 5.2Q2 1 5.6 1Q9.2 1 9.2 5.2Q7.4 3.4 5.6 3.6Q3.8 3.4 2 5.2zM10.8 5.2Q10.8 1 14.4 1Q18 1 18 5.2Q16.2 3.4 14.4 3.6Q12.6 3.4 10.8 5.2z" fill="#f2a560"/><path d="M4.8 19.6V17.2Q4.8 14 8 14H12Q15.2 14 15.2 17.2V19.6z" fill="#7db4ec"/><path d="M9 14H11L10.5 19H9.5z" fill="#fff"/><circle cx="10" cy="10" r="3.5" fill="#f8df8c"/><path d="M6.4 9.8Q6.4 5.8 10 5.8Q13.6 5.8 13.6 9.8Q11.8 8 10 8.2Q8.2 8 6.4 9.8z" fill="#7f9fc6"/></svg>
<svg style="left:433.1px;top:412.70000000000005px;" width="10" height="8.8" viewBox="0 0 20 20" preserveAspectRatio="none"><rect x="0.8" y="1.6" width="18.4" height="16" rx="1" fill="#dccdec" stroke="#bda4da" stroke-width="1.1"/><rect x="3" y="3.8" width="14" height="11.6" fill="none" stroke="#cbb8e2" stroke-width="0.7"/><circle cx="11.8" cy="9.6" r="4.4" fill="#f3f4f8" stroke="#a4aab8" stroke-width="1.5"/><circle cx="11.8" cy="9.6" r="1.5" fill="#a4aab8"/><rect x="4.2" y="6.6" width="1.5" height="6" fill="#a98fd0"/><rect x="3" y="17.6" width="3" height="1.6" fill="#bda4da"/><rect x="14" y="17.6" width="3" height="1.6" fill="#bda4da"/></svg>
<svg style="left:482.5px;top:426.3px;" width="9.4" height="9.4" viewBox="0 0 20 20"><path d="M2.6 1.6L11.6 10.8" stroke="#8797a7" stroke-width="2.3" stroke-linecap="round"/><path d="M10.6 10.6L13 8.4L19.4 15.2Q20.2 17.4 18.6 18.6Q17 19.4 15.6 18z" fill="#f07c7e"/><path d="M17.8 0.8Q13.4 -0.6 11.8 3.2Q11.2 5 12 6.6L1.2 16.4Q0.2 18.2 1.6 19.2Q3 20 4.4 18.8L14.2 8.4Q17 9.4 19 7Q20.2 5 19.6 3L16.8 5.6L14.6 5L14.2 3.2z" fill="#d3c1ea"/></svg>
<svg style="left:526.7px;top:412.6px;" width="9" height="9" viewBox="0 0 20 20"><g fill="#d9e7f9" stroke="#5b96e2" stroke-width="1.9"><rect x="9.4" y="0.6" width="6.4" height="10.6" rx="3.2" transform="rotate(45 12.6 5.9)"/><rect x="2.2" y="7.8" width="6.4" height="10.6" rx="3.2" transform="rotate(45 5.4 13.1)"/></g><path d="M7.4 11.6L11.4 7.6" stroke="#5b96e2" stroke-width="2"/><circle cx="14.8" cy="14.6" r="4.8" fill="#a9dba8"/><path d="M14.8 11.8V17.4M12 14.6H17.6" stroke="#fff" stroke-width="1.4"/></svg>
<svg style="left:526.7px;top:425.6px;" width="10" height="10" viewBox="0 0 20 20"><path d="M10 0.6L19.4 10L10 19.4L0.6 10z" fill="#f5cb78"/></svg>
<svg style="left:526.6px;top:440.4px;" width="9.6" height="9.6" viewBox="0 0 20 20"><path d="M8.6 8.6L18 18M14.4 14.4L12 16.8M17 17L14.8 19.2" stroke="#efbd55" stroke-width="3.4"/><circle cx="6.2" cy="6.2" r="5.4" fill="#f4c863"/><circle cx="4.6" cy="4.6" r="1.5" fill="#fff3cf"/></svg>
<svg style="left:540.6px;top:412.90000000000003px;" width="9" height="8.4" viewBox="0 0 9 8.4"><rect x="0.4" y="0.4" width="8.2" height="7.6" fill="#d9c8ec" stroke="#bda4da" stroke-width="0.7"/><circle cx="5.4" cy="5" r="2.4" fill="#a8daa6"/><path d="M4.2 5H6.6M5.4 3.8V6.2" stroke="#fff" stroke-width="0.7"/></svg>
<svg style="left:502px;top:393.3px;" width="9.6" height="9.6" viewBox="0 0 10 10"><path d="M1.2 4.2A4 4 0 0 1 8.6 3.2" fill="none" stroke="#4a90e2" stroke-width="1.6"/><path d="M9.6 0.8V4.2H6.2z" fill="#4a90e2"/><path d="M8.8 5.8A4 4 0 0 1 1.4 6.8" fill="none" stroke="#4a90e2" stroke-width="1.6"/><path d="M0.4 9.2V5.8H3.8z" fill="#4a90e2"/></svg>
<svg style="left:509px;top:393px;" width="7" height="10" viewBox="0 0 7 10"><path d="M3.5 0.8C2 0.8 1.2 2.4 1.2 4.2V6.6L0.2 8.2H6.8L5.8 6.6V4.2C5.8 2.4 5 0.8 3.5 0.8z" fill="#f7dd8a"/></svg>
<svg style="left:514px;top:393.4px;" width="9.6" height="9.6" viewBox="0 0 9.6 9.6"><circle cx="4.8" cy="4.8" r="4.8" fill="#5b9bea"/><text x="4.8" y="7" font-size="6" font-weight="bold" fill="#b5d2f7" text-anchor="middle" font-family="Liberation Sans, sans-serif">i</text></svg>
<svg style="left:593.5px;top:353.6px;" width="8" height="8" viewBox="0 0 8 8"><circle cx="4" cy="4" r="4" fill="#7fb0ee"/><text x="4" y="6.3" font-size="6" font-weight="bold" fill="#b9d5f9" text-anchor="middle" font-family="Liberation Sans, sans-serif">?</text></svg>
<div class="a" style="left:609.4px;top:348.8px;width:306.6px;height:145.2px;background:#fff;"></div>
<div class="a" style="left:610.8px;top:366px;width:306px;height:128px;background:#f7f8fd;"></div>
<div class="a" style="left:609.4px;top:348.8px;width:306.6px;height:17.1px;background:#dde1f7;"></div>
<div class="t " style="left:630px;top:353.4px;">Menu Item</div>
<div class="t " style="left:614.8px;top:372.6px;">Menu Name</div>
<div class="inp" style="left:615px;top:383.3px;width:108.5px;height:14.3px;"></div>
<div class="t " style="left:618.6px;top:386.4px;letter-spacing:0.034px;">Open Architecture</div>
<div class="t " style="left:729.6px;top:372.6px;">Group Name</div>
<div class="inp" style="left:730px;top:383.3px;width:108.8px;height:14.3px;"></div>
<div class="t " style="left:733.6px;top:386.4px;letter-spacing:-0.016px;">Data Integration</div>
<div class="t " style="left:843.6px;top:372.6px;letter-spacing:-0.171px;">Group Help URL</div>
<div class="inp" style="left:844px;top:383.3px;width:80px;height:14.3px;"></div>
<div class="t " style="left:614.8px;top:404.4px;">Item</div>
<div class="inp" style="left:615px;top:415.2px;width:108.5px;height:14.3px;background:#f1f3fc;border-color:#d0d5e8"></div>
<div class="t " style="left:617.2px;top:418.3px;letter-spacing:-0.108px;">Obfuscated Fields</div>
<div class="red" style="left:683.5px;top:418.6px">7</div>
<svg style="left:716px;top:421px;" width="5" height="3.5" viewBox="0 0 5 3.5"><path d="M0 0H5L2.5 3.5z" fill="#222"/></svg>
<div class="t " style="left:729.6px;top:404.4px;">Item Name</div>
<div class="inp" style="left:730px;top:415.2px;width:108.8px;height:14.3px;"></div>
<div class="t " style="left:733.6px;top:418.3px;letter-spacing:-0.108px;">Obfuscated Fields</div>
<div class="t" style="left:843.6px;top:404.5px;width:60.4px;overflow:hidden">Active On All Menu</div>
<div class="cb" style="left:844.2px;top:418.3px;"></div>
<div class="t " style="left:614.8px;top:436.1px;letter-spacing:-0.085px;">Activate On Load</div>
<div class="cb" style="left:615.5px;top:449.8px;"></div>
<div class="t " style="left:729.6px;top:436.1px;">Add To Menu Bar</div>
<div class="cb" style="left:730.3px;top:449.8px;"></div>
<div class="t" style="left:797px;top:436.2px;width:62px;overflow:hidden">Add To Quick Access</div>
<div class="cb" style="left:797.5px;top:449.8px;"></div>
<div class="t " style="left:865.3px;top:436.1px;">Add To User Menu</div>
<div class="cb" style="left:866.2px;top:449.8px;"></div>
<div class="t " style="left:614.8px;top:467.8px;">Add To Simplified Menu</div>
<div class="cb" style="left:615.5px;top:481.4px;"></div>
<div class="t " style="left:729.6px;top:467.8px;">Visible</div>
<div class="cb" style="left:730.3px;top:481.4px;"><svg style="left:0;top:0" width="6" height="6" viewBox="0 0 6 6"><path d="M1 3.2L2.5 4.6L5 1.4" fill="none" stroke="#333" stroke-width="0.9"/></svg></div>
<div class="t " style="left:797px;top:467.8px;">Item Description</div>
<div class="inp" style="left:796.6px;top:478.3px;width:109.3px;height:14.2px;"></div>
<div class="t " style="left:800.4px;top:481.4px;letter-spacing:-0.094px;">Obfuscated Fields.</div>
<svg style="left:9.2px;top:107px;opacity:0.8" width="12.6" height="10" viewBox="0 0 20 20" preserveAspectRatio="none"><path d="M0.2 16V13Q0.2 9.6 4 9.6H8V16z" fill="#a6d8a0"/><path d="M19.8 16V13Q19.8 9.6 16 9.6H12V16z" fill="#86bdf0"/><circle cx="5.6" cy="5.4" r="3.5" fill="#f8df8c"/><circle cx="14.4" cy="5.4" r="3.5" fill="#f8df8c"/><path d="M2 5.2Q2 1 5.6 1Q9.2 1 9.2 5.2Q7.4 3.4 5.6 3.6Q3.8 3.4 2 5.2zM10.8 5.2Q10.8 1 14.4 1Q18 1 18 5.2Q16.2 3.4 14.4 3.6Q12.6 3.4 10.8 5.2z" fill="#f2a560"/><path d="M4.8 19.6V17.2Q4.8 14 8 14H12Q15.2 14 15.2 17.2V19.6z" fill="#7db4ec"/><path d="M9 14H11L10.5 19H9.5z" fill="#fff"/><circle cx="10" cy="10" r="3.5" fill="#f8df8c"/><path d="M6.4 9.8Q6.4 5.8 10 5.8Q13.6 5.8 13.6 9.8Q11.8 8 10 8.2Q8.2 8 6.4 9.8z" fill="#7f9fc6"/></svg>
<svg style="left:45.3px;top:86px;opacity:0.75" width="15.2" height="11.8" viewBox="0 0 20 20" preserveAspectRatio="none"><path d="M0.2 16V13Q0.2 9.6 4 9.6H8V16z" fill="#a6d8a0"/><path d="M19.8 16V13Q19.8 9.6 16 9.6H12V16z" fill="#86bdf0"/><circle cx="5.6" cy="5.4" r="3.5" fill="#f8df8c"/><circle cx="14.4" cy="5.4" r="3.5" fill="#f8df8c"/><path d="M2 5.2Q2 1 5.6 1Q9.2 1 9.2 5.2Q7.4 3.4 5.6 3.6Q3.8 3.4 2 5.2zM10.8 5.2Q10.8 1 14.4 1Q18 1 18 5.2Q16.2 3.4 14.4 3.6Q12.6 3.4 10.8 5.2z" fill="#f2a560"/><path d="M4.8 19.6V17.2Q4.8 14 8 14H12Q15.2 14 15.2 17.2V19.6z" fill="#7db4ec"/><path d="M9 14H11L10.5 19H9.5z" fill="#fff"/><circle cx="10" cy="10" r="3.5" fill="#f8df8c"/><path d="M6.4 9.8Q6.4 5.8 10 5.8Q13.6 5.8 13.6 9.8Q11.8 8 10 8.2Q8.2 8 6.4 9.8z" fill="#7f9fc6"/></svg>
<svg style="left:511.6px;top:106px;" width="12.2" height="11.8" viewBox="0 0 20 20" preserveAspectRatio="none"><circle cx="10" cy="6" r="5.4" fill="#fbe18d"/><path d="M0.6 19.4Q0.6 12.2 10 12.2Q19.4 12.2 19.4 19.4z" fill="#c5e3f8" stroke="#b3d6f0" stroke-width="0.5"/></svg>
<svg style="left:571.7px;top:108.2px;" width="12.1" height="8" viewBox="0 0 20 20" preserveAspectRatio="none"><path d="M0 2.6H20M0 10H20M0 17.4H20" stroke="#55cb5e" stroke-width="4.6"/></svg>
<svg style="left:10.4px;top:231px;" width="11.2" height="11.2" viewBox="0 0 20 20"><rect x="0.6" y="1.4" width="18.8" height="17.2" fill="#e9f3fb"/><rect x="0.6" y="1.4" width="18.8" height="2.6" fill="#c5e3f8"/><rect x="2" y="5" width="16" height="2.2" fill="#d9b7d9"/><rect x="2" y="8.6" width="7.4" height="8.6" fill="#b2e0a6"/><rect x="10.6" y="8.6" width="7.4" height="8.6" fill="#b2e0a6"/></svg>
<svg style="left:9.6px;top:352px;" width="12.2" height="11" viewBox="0 0 20 20" preserveAspectRatio="none"><rect x="0.6" y="1.6" width="18.8" height="15.6" fill="#f6fbff" stroke="#c6def2" stroke-width="0.8"/><rect x="0.6" y="1.6" width="18.8" height="3.4" fill="#a8d0f2"/><path d="M3 8.4H13M3 11H11M3 13.6H12" stroke="#e1e8f2" stroke-width="1"/><path d="M15 13.6L19.6 17.4L17 17.8L15.6 19.8z" fill="#4a7ec0"/></svg>
<svg style="left:70.5px;top:353px;" width="11.8" height="9" viewBox="0 0 20 20" preserveAspectRatio="none"><path d="M0 2.6H20M0 10H20M0 17.4H20" stroke="#55cb5e" stroke-width="4.6"/></svg>
<svg style="left:613px;top:353.4px;" width="11.6" height="8.2" viewBox="0 0 20 20" preserveAspectRatio="none"><path d="M0 2.6H20M0 10H20M0 17.4H20" stroke="#55cb5e" stroke-width="4.6"/></svg>
<svg style="left:4px;top:88px;" width="5" height="10" viewBox="0 0 5 10"><circle cx="3.6" cy="2" r="1.6" fill="#f6b877"/><path d="M0.4 9.6Q0.4 6 4.4 6V9.6z" fill="#a6d8a0"/></svg>
<svg style="left:692.8px;top:107.4px;" width="7.4" height="8.8" viewBox="0 0 7.4 8.8"><path d="M0.6 2L4.8 0.4L7 1V7.8L4.8 8.4L0.6 6.8L4.4 7.2V1.6L2 2.2V6.2L0.6 6.8z" fill="#dc3e1e" stroke="#dc3e1e" stroke-width="0.5" stroke-linejoin="round"/></svg>
<svg style="left:708.5px;top:107.2px;" width="8" height="9" viewBox="0 0 8 9"><path d="M0.8 0.6H4.4L6.4 2.6V8.4H0.8z" fill="#fdfdff" stroke="#dfe2ea" stroke-width="0.6"/><circle cx="5.4" cy="6.6" r="1.7" fill="#bfe6bd"/></svg>
<svg style="left:721.4px;top:108.4px;" width="7.4" height="7.6" viewBox="0 0 7.4 7.6"><path d="M0.6 0.6L6.8 7M6.8 0.6L0.6 7" stroke="#f1bccb" stroke-width="1.5"/></svg>
<svg style="left:620.7px;top:143.3px;" width="7" height="7.6" viewBox="0 0 6 7" preserveAspectRatio="none"><path d="M0 0.3H6L3.7 3.2V6.6L2.3 5.8V3.2z" fill="#2d2d35"/></svg>
<svg style="left:118.6px;top:268.1px;" width="7" height="7.6" viewBox="0 0 6 7" preserveAspectRatio="none"><path d="M0 0.3H6L3.7 3.2V6.6L2.3 5.8V3.2z" fill="#2d2d35"/></svg>
<svg style="left:180.8px;top:268.1px;" width="7" height="7.6" viewBox="0 0 6 7" preserveAspectRatio="none"><path d="M0 0.3H6L3.7 3.2V6.6L2.3 5.8V3.2z" fill="#2d2d35"/></svg>
</div>
</body></html>
